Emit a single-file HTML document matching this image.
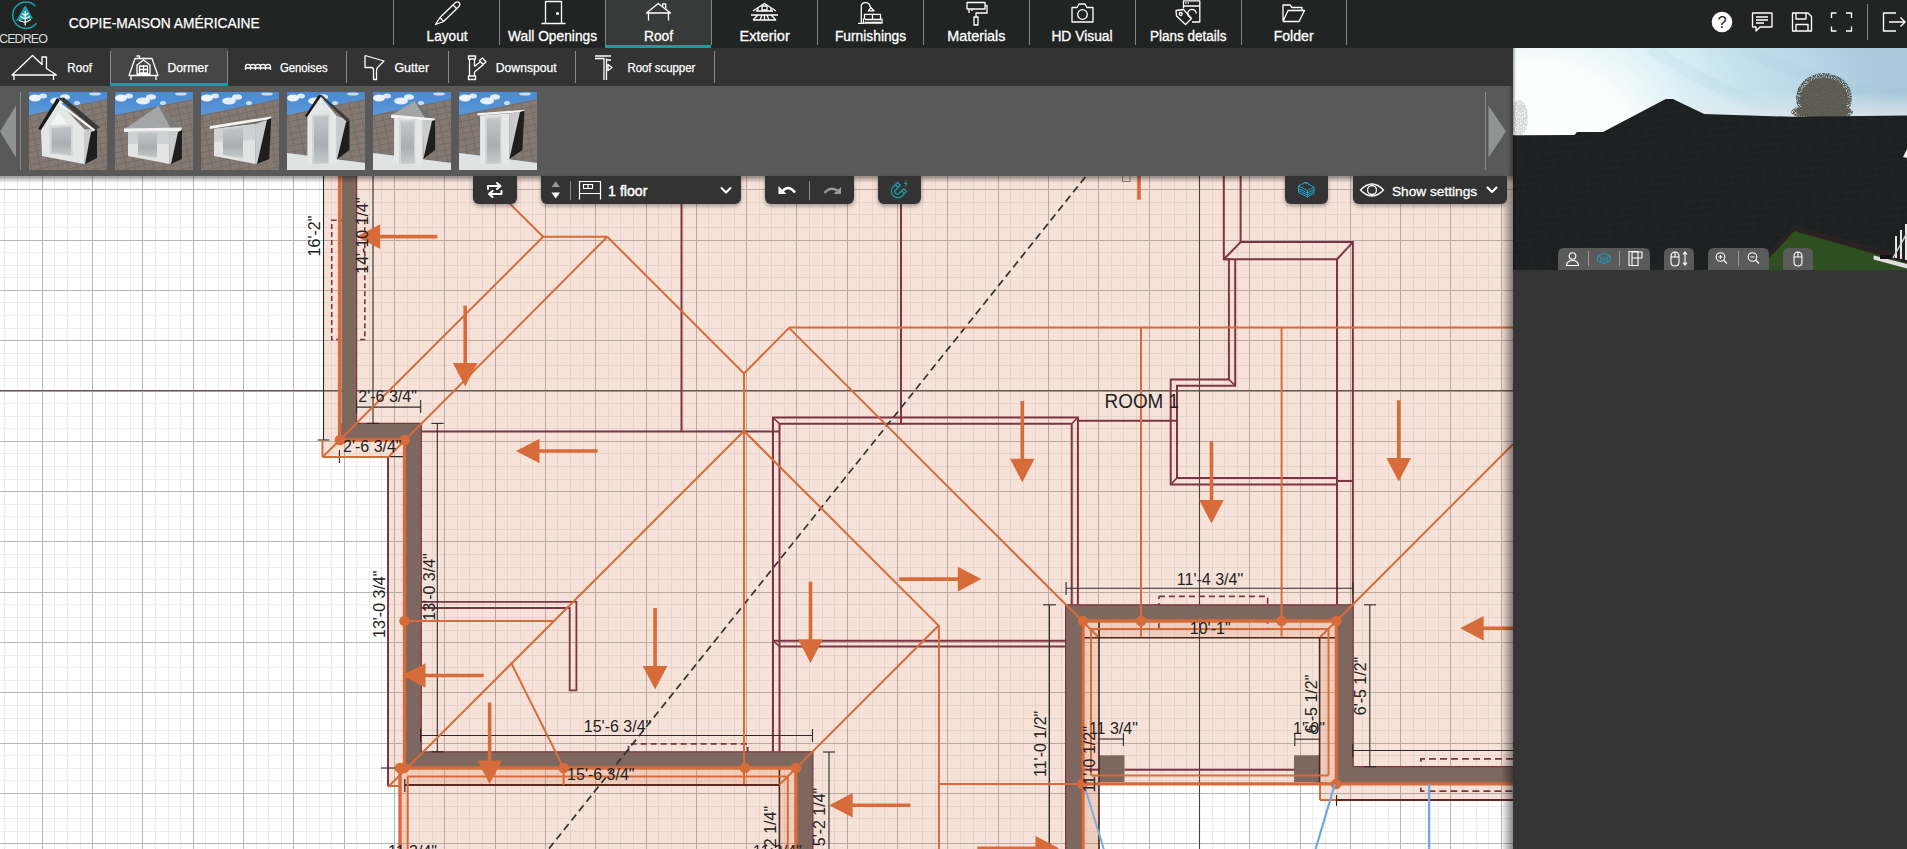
<!DOCTYPE html>
<html><head><meta charset="utf-8">
<style>
*{box-sizing:border-box}
html,body{margin:0;padding:0}
body{width:1907px;height:849px;overflow:hidden;position:relative;background:#fff;font-family:"Liberation Sans",sans-serif}
.abs{position:absolute}
</style></head><body>
<svg class="abs" style="left:0;top:0" width="1513" height="849" viewBox="0 0 1513 849" font-family="Liberation Sans, sans-serif">
<rect x="0" y="175" width="1513" height="674" fill="#fff"/>
<path d="M4.5 175V849M17.5 175V849M29.5 175V849M54.5 175V849M67.5 175V849M80.5 175V849M105.5 175V849M117.5 175V849M130.5 175V849M155.5 175V849M168.5 175V849M180.5 175V849M205.5 175V849M218.5 175V849M230.5 175V849M256.5 175V849M268.5 175V849M281.5 175V849M306.5 175V849M319.5 175V849M331.5 175V849M356.5 175V849M369.5 175V849M381.5 175V849M407.5 175V849M419.5 175V849M432.5 175V849M457.5 175V849M469.5 175V849M482.5 175V849M507.5 175V849M520.5 175V849M532.5 175V849M557.5 175V849M570.5 175V849M583.5 175V849M608.5 175V849M620.5 175V849M633.5 175V849M658.5 175V849M671.5 175V849M683.5 175V849M708.5 175V849M721.5 175V849M734.5 175V849M759.5 175V849M771.5 175V849M784.5 175V849M809.5 175V849M822.5 175V849M834.5 175V849M859.5 175V849M872.5 175V849M884.5 175V849M910.5 175V849M922.5 175V849M935.5 175V849M960.5 175V849M973.5 175V849M985.5 175V849M1010.5 175V849M1023.5 175V849M1035.5 175V849M1061.5 175V849M1073.5 175V849M1086.5 175V849M1111.5 175V849M1123.5 175V849M1136.5 175V849M1161.5 175V849M1174.5 175V849M1186.5 175V849M1212.5 175V849M1224.5 175V849M1237.5 175V849M1262.5 175V849M1274.5 175V849M1287.5 175V849M1312.5 175V849M1325.5 175V849M1337.5 175V849M1362.5 175V849M1375.5 175V849M1388.5 175V849M1413.5 175V849M1425.5 175V849M1438.5 175V849M1463.5 175V849M1476.5 175V849M1488.5 175V849M0 177.5H1513M0 202.5H1513M0 214.5H1513M0 227.5H1513M0 252.5H1513M0 265.5H1513M0 277.5H1513M0 302.5H1513M0 315.5H1513M0 328.5H1513M0 353.5H1513M0 365.5H1513M0 378.5H1513M0 403.5H1513M0 416.5H1513M0 428.5H1513M0 453.5H1513M0 466.5H1513M0 479.5H1513M0 504.5H1513M0 516.5H1513M0 529.5H1513M0 554.5H1513M0 567.5H1513M0 579.5H1513M0 604.5H1513M0 617.5H1513M0 630.5H1513M0 655.5H1513M0 667.5H1513M0 680.5H1513M0 705.5H1513M0 718.5H1513M0 730.5H1513M0 755.5H1513M0 768.5H1513M0 780.5H1513M0 806.5H1513M0 818.5H1513M0 831.5H1513" stroke="#eceeee" stroke-width="1" fill="none"/>
<path d="M42.5 175V849M92.5 175V849M142.5 175V849M193.5 175V849M243.5 175V849M293.5 175V849M344.5 175V849M394.5 175V849M444.5 175V849M495.5 175V849M545.5 175V849M595.5 175V849M646.5 175V849M696.5 175V849M746.5 175V849M796.5 175V849M847.5 175V849M897.5 175V849M947.5 175V849M998.5 175V849M1048.5 175V849M1098.5 175V849M1149.5 175V849M1199.5 175V849M1249.5 175V849M1300.5 175V849M1350.5 175V849M1400.5 175V849M1450.5 175V849M1501.5 175V849M0 189.5H1513M0 240.5H1513M0 290.5H1513M0 340.5H1513M0 391.5H1513M0 441.5H1513M0 491.5H1513M0 541.5H1513M0 592.5H1513M0 642.5H1513M0 692.5H1513M0 743.5H1513M0 793.5H1513M0 843.5H1513" stroke="#b4b8b8" stroke-width="1" fill="none"/>
<polygon points="323,175 1513,175 1513,800 1320,800 1320,784 1099,784 1099,849 400,849 400,786 388,786 388,457 323,457" fill="rgba(210,110,60,0.2)"/>
<polygon points="1083,621 1336,621 1336,784 1320,784 1320,637 1099,637 1099,849 1083,849" fill="rgba(210,100,50,0.16)"/>
<polygon points="400,768 796,768 796,849 779,849 779,785 408,785 408,849 400,849" fill="rgba(210,100,50,0.16)"/>
<line x1="0" y1="390.6" x2="1513" y2="390.6" stroke="#6a5a55" stroke-width="1.2" />
<line x1="1199.5" y1="175" x2="1199.5" y2="849" stroke="#4a4040" stroke-width="1.1" />
<polyline points="1158.9,596.4 1267.6,596.4 1267.6,629 1158.9,629 1158.9,596.4" stroke="#7e3444" stroke-width="1.6" fill="none" stroke-dasharray="6 4"/>
<polyline points="1513,758.8 1420.9,758.8 1420.9,791.2 1513,791.2" stroke="#7e3444" stroke-width="1.8" fill="none" stroke-dasharray="7 4"/>
<rect x="331.7" y="220.3" width="33.1" height="119.2" fill="none" stroke="#7e3444" stroke-width="1.6" stroke-dasharray="5 3"/>
<rect x="341.5" y="175" width="15.100000000000023" height="265" fill="#7e675f"/>
<rect x="338.5" y="423.4" width="82.80000000000001" height="16.600000000000023" fill="#7e675f"/>
<rect x="404.5" y="423.4" width="16.80000000000001" height="344.6" fill="#7e675f"/>
<rect x="404.5" y="751.8" width="408.4" height="16.200000000000045" fill="#7e675f"/>
<rect x="796" y="751.8" width="16.899999999999977" height="97.20000000000005" fill="#7e675f"/>
<rect x="1065.6" y="604.8" width="287.60000000000014" height="16.200000000000045" fill="#7e675f"/>
<rect x="1065.6" y="604.8" width="15.900000000000091" height="244.20000000000005" fill="#7e675f"/>
<rect x="1336.9" y="604.8" width="16.399999999999864" height="179.20000000000005" fill="#7e675f"/>
<rect x="1336.7" y="766.7" width="176.29999999999995" height="17.299999999999955" fill="#7e675f"/>
<rect x="1099" y="755.3" width="25.5" height="26.800000000000068" fill="#7e675f"/>
<rect x="1294" y="755.3" width="25.59999999999991" height="26.700000000000045" fill="#7e675f"/>
<polyline points="356.6,175 356.6,423.4 421.3,423.4 421.3,751.8 812.9,751.8 812.9,849" stroke="#7e3444" stroke-width="1.2" fill="none" />
<polyline points="1081.5,849 1081.5,621" stroke="#7e3444" stroke-width="1" fill="none" />
<polyline points="1065.6,849 1065.6,604.8 1353.2,604.8 1353.2,766.7 1513,766.7" stroke="#7e3444" stroke-width="1.2" fill="none" />
<line x1="681.5" y1="175" x2="681.5" y2="431.4" stroke="#7e3444" stroke-width="2" />
<line x1="421" y1="431.4" x2="744" y2="431.4" stroke="#7e3444" stroke-width="2" />
<line x1="744" y1="431.4" x2="779.7" y2="431.4" stroke="#7e3444" stroke-width="2" />
<line x1="901" y1="175" x2="901" y2="423.8" stroke="#7e3444" stroke-width="2" />
<polyline points="773,751.8 773,417.6 1077.9,417.6 1077.9,604.8" stroke="#7e3444" stroke-width="2" fill="none" />
<polyline points="779.5,751.8 779.5,423.8 1071.7,423.8 1071.7,604.8" stroke="#7e3444" stroke-width="2" fill="none" />
<line x1="773" y1="417.6" x2="779.5" y2="423.8" stroke="#7e3444" stroke-width="1.5" />
<line x1="1077.9" y1="417.6" x2="1071.7" y2="423.8" stroke="#7e3444" stroke-width="1.5" />
<polyline points="773,640.7 1065.6,640.7" stroke="#7e3444" stroke-width="2" fill="none" />
<line x1="773" y1="640.7" x2="779.5" y2="646.4" stroke="#7e3444" stroke-width="1.5" />
<polyline points="779.5,646.4 1065.6,646.4" stroke="#7e3444" stroke-width="2" fill="none" />
<line x1="1077.9" y1="420.8" x2="1177" y2="420.8" stroke="#7e3444" stroke-width="2" />
<polyline points="1223.8,175 1223.8,259.3 1228.9,259.3 1228.9,379.4 1170.7,379.4 1170.7,484.4 1337,484.4" stroke="#7e3444" stroke-width="2" fill="none" />
<polyline points="1240.6,175 1240.6,242.1 1352.9,242.1 1352.9,604.8" stroke="#7e3444" stroke-width="2" fill="none" />
<polyline points="1223.8,259.3 1337,259.3 1337,604.8" stroke="#7e3444" stroke-width="2" fill="none" />
<line x1="1223.8" y1="259.3" x2="1240.6" y2="242.1" stroke="#7e3444" stroke-width="2" />
<line x1="1337" y1="259.3" x2="1352.9" y2="242.1" stroke="#7e3444" stroke-width="2" />
<polyline points="1235.2,259.3 1235.2,385.8 1177,385.8 1177,478 1337,478" stroke="#7e3444" stroke-width="2" fill="none" />
<line x1="1228.9" y1="379.4" x2="1235.2" y2="385.8" stroke="#7e3444" stroke-width="1.5" />
<line x1="1170.7" y1="484.4" x2="1177" y2="478" stroke="#7e3444" stroke-width="1.5" />
<line x1="1337" y1="481" x2="1353" y2="481" stroke="#7e3444" stroke-width="2" />
<line x1="1081.5" y1="769.7" x2="1099" y2="769.7" stroke="#7e3444" stroke-width="2" />
<line x1="1124.5" y1="769.7" x2="1294" y2="769.7" stroke="#7e3444" stroke-width="2" />
<polyline points="421.3,601.8 576.4,601.8 576.4,690.4 569.7,690.4 569.7,608 421.3,608" stroke="#7e3444" stroke-width="1.8" fill="none" />
<line x1="388" y1="457" x2="388" y2="786" stroke="#7e3444" stroke-width="2" />
<polyline points="628.6,751.8 628.6,743.9 747.7,743.9 747.7,751.8" stroke="#7e3444" stroke-width="1.8" fill="none" stroke-dasharray="6 4"/>
<line x1="1085.3" y1="177" x2="548.7" y2="849" stroke="#333" stroke-width="1.7" stroke-dasharray="7.5 4.5"/>
<line x1="323.5" y1="175" x2="323.5" y2="440" stroke="#2a2a2a" stroke-width="1.1" />
<line x1="317.7" y1="440" x2="329.4" y2="440" stroke="#2a2a2a" stroke-width="1.1" />
<line x1="373" y1="175" x2="373" y2="423.4" stroke="#2a2a2a" stroke-width="1.1" />
<line x1="367" y1="423.4" x2="379" y2="423.4" stroke="#2a2a2a" stroke-width="1.1" />
<line x1="356.5" y1="407.1" x2="420.7" y2="407.1" stroke="#2a2a2a" stroke-width="1.1" />
<line x1="356.5" y1="400" x2="356.5" y2="413" stroke="#2a2a2a" stroke-width="1.1" />
<line x1="420.7" y1="400" x2="420.7" y2="413" stroke="#2a2a2a" stroke-width="1.1" />
<line x1="339.4" y1="456.6" x2="404.4" y2="456.6" stroke="#2a2a2a" stroke-width="1.1" />
<line x1="339.4" y1="450" x2="339.4" y2="463" stroke="#2a2a2a" stroke-width="1.1" />
<line x1="404.4" y1="450" x2="404.4" y2="463" stroke="#2a2a2a" stroke-width="1.1" />
<line x1="437.3" y1="423.4" x2="437.3" y2="751.8" stroke="#2a2a2a" stroke-width="1.1" />
<line x1="431.3" y1="423.4" x2="443.7" y2="423.4" stroke="#2a2a2a" stroke-width="1.1" />
<line x1="431.3" y1="751.8" x2="443.7" y2="751.8" stroke="#2a2a2a" stroke-width="1.1" />
<line x1="420.6" y1="735.5" x2="812.5" y2="735.5" stroke="#2a2a2a" stroke-width="1.1" />
<line x1="420.6" y1="729" x2="420.6" y2="742" stroke="#2a2a2a" stroke-width="1.1" />
<line x1="812.5" y1="729" x2="812.5" y2="742" stroke="#2a2a2a" stroke-width="1.1" />
<line x1="773" y1="768.5" x2="785.6" y2="768.5" stroke="#2a2a2a" stroke-width="1.1" />
<line x1="829" y1="752" x2="829" y2="849" stroke="#2a2a2a" stroke-width="1.1" />
<line x1="823" y1="752" x2="835" y2="752" stroke="#2a2a2a" stroke-width="1.1" />
<line x1="1049.4" y1="604.8" x2="1049.4" y2="849" stroke="#2a2a2a" stroke-width="1.1" />
<line x1="1043" y1="604.8" x2="1056" y2="604.8" stroke="#2a2a2a" stroke-width="1.1" />
<line x1="1066.1" y1="588.2" x2="1353" y2="588.2" stroke="#2a2a2a" stroke-width="1.1" />
<line x1="1066.1" y1="582" x2="1066.1" y2="595" stroke="#2a2a2a" stroke-width="1.1" />
<line x1="1353" y1="582" x2="1353" y2="595" stroke="#2a2a2a" stroke-width="1.1" />
<line x1="1092" y1="621" x2="1106" y2="621" stroke="#2a2a2a" stroke-width="1.1" />
<line x1="1314" y1="783" x2="1326" y2="783" stroke="#2a2a2a" stroke-width="1.1" />
<line x1="1098.9" y1="739" x2="1123.4" y2="739" stroke="#2a2a2a" stroke-width="1.1" />
<line x1="1123.4" y1="733" x2="1123.4" y2="746" stroke="#2a2a2a" stroke-width="1.1" />
<line x1="1294.8" y1="739.2" x2="1320" y2="739.2" stroke="#2a2a2a" stroke-width="1.1" />
<line x1="1294.8" y1="733" x2="1294.8" y2="746" stroke="#2a2a2a" stroke-width="1.1" />
<line x1="1369.8" y1="604.8" x2="1369.8" y2="766.7" stroke="#2a2a2a" stroke-width="1.1" />
<line x1="1364" y1="604.8" x2="1376" y2="604.8" stroke="#2a2a2a" stroke-width="1.1" />
<line x1="1364" y1="766.7" x2="1376" y2="766.7" stroke="#2a2a2a" stroke-width="1.1" />
<line x1="1352.8" y1="750.5" x2="1513" y2="750.5" stroke="#2a2a2a" stroke-width="1.1" />
<line x1="1352.8" y1="744" x2="1352.8" y2="757" stroke="#2a2a2a" stroke-width="1.1" />
<line x1="1083" y1="631" x2="1083" y2="644" stroke="#2a2a2a" stroke-width="1.1" />
<line x1="381" y1="768" x2="395" y2="768" stroke="#2a2a2a" stroke-width="1.1" />
<line x1="1314" y1="621" x2="1326" y2="621" stroke="#2a2a2a" stroke-width="1.1" />
<line x1="1336.4" y1="631" x2="1336.4" y2="644" stroke="#2a2a2a" stroke-width="1.1" />
<line x1="1336.5" y1="795" x2="1336.5" y2="806" stroke="#2a2a2a" stroke-width="1.1" />
<line x1="404.8" y1="785" x2="779.4" y2="785" stroke="#5e2c1e" stroke-width="2" />
<line x1="1083" y1="637.7" x2="1336.4" y2="637.7" stroke="#4a2418" stroke-width="1.6" />
<line x1="1099" y1="621" x2="1099" y2="849" stroke="#4a2418" stroke-width="1.6" />
<line x1="1319.6" y1="637" x2="1319.6" y2="784" stroke="#4a2418" stroke-width="1.6" />
<line x1="779.4" y1="768.5" x2="779.4" y2="849" stroke="#4a2418" stroke-width="1.6" />
<line x1="1336" y1="800" x2="1513" y2="800" stroke="#5e2c1e" stroke-width="2" />
<line x1="404.8" y1="779" x2="404.8" y2="792" stroke="#2a2a2a" stroke-width="1.2" />
<line x1="795.8" y1="779" x2="795.8" y2="792" stroke="#6b2a1e" stroke-width="1.5" />
<line x1="322.4" y1="457.2" x2="543.1" y2="236.8" stroke="#d76c3a" stroke-width="2" />
<line x1="388.3" y1="457" x2="607.3" y2="236.8" stroke="#d76c3a" stroke-width="2" />
<line x1="481" y1="175" x2="543.1" y2="236.8" stroke="#d76c3a" stroke-width="2" />
<line x1="543.1" y1="236.8" x2="607.3" y2="236.8" stroke="#d76c3a" stroke-width="2" />
<line x1="607.3" y1="236.8" x2="744" y2="373.5" stroke="#d76c3a" stroke-width="2" />
<line x1="744" y1="373.5" x2="788.6" y2="328.4" stroke="#d76c3a" stroke-width="2" />
<line x1="788.6" y1="327.4" x2="1513" y2="327.4" stroke="#d76c3a" stroke-width="2" />
<line x1="788.6" y1="327.4" x2="1098.3" y2="637" stroke="#d76c3a" stroke-width="2" />
<line x1="744" y1="373.5" x2="744" y2="784.3" stroke="#d76c3a" stroke-width="2" />
<line x1="744" y1="431" x2="388" y2="787" stroke="#d76c3a" stroke-width="2" />
<line x1="744" y1="431" x2="938.9" y2="625.9" stroke="#d76c3a" stroke-width="2" />
<line x1="938.9" y1="625.3" x2="938.9" y2="849" stroke="#d76c3a" stroke-width="2" />
<line x1="938.9" y1="625.3" x2="779.2" y2="785" stroke="#d76c3a" stroke-width="2" />
<line x1="510.9" y1="662.4" x2="563.6" y2="768" stroke="#d76c3a" stroke-width="2" />
<line x1="563.6" y1="768" x2="563.6" y2="785" stroke="#d76c3a" stroke-width="2" />
<line x1="1141" y1="327.4" x2="1141" y2="636.5" stroke="#d76c3a" stroke-width="2" />
<line x1="1281.6" y1="327.4" x2="1281.6" y2="636.5" stroke="#d76c3a" stroke-width="2" />
<line x1="1320.3" y1="637" x2="1513" y2="444.3" stroke="#d76c3a" stroke-width="2" />
<line x1="1091" y1="629" x2="1091" y2="775.5" stroke="#d76c3a" stroke-width="2" />
<line x1="1091" y1="629" x2="1328.5" y2="629" stroke="#d76c3a" stroke-width="2" />
<line x1="1328.5" y1="629" x2="1328.5" y2="775.5" stroke="#d76c3a" stroke-width="2" />
<line x1="1091" y1="775.5" x2="1328.5" y2="775.5" stroke="#d76c3a" stroke-width="2" />
<line x1="407.7" y1="776.4" x2="407.7" y2="849" stroke="#d76c3a" stroke-width="2" />
<line x1="407.7" y1="776.4" x2="787.8" y2="776.4" stroke="#d76c3a" stroke-width="2" />
<line x1="787.8" y1="776.4" x2="787.8" y2="849" stroke="#d76c3a" stroke-width="2" />
<line x1="322.4" y1="457" x2="388.3" y2="457" stroke="#d76c3a" stroke-width="2" />
<line x1="322.4" y1="440" x2="322.4" y2="457" stroke="#d76c3a" stroke-width="2" />
<line x1="388" y1="786" x2="400" y2="786" stroke="#d76c3a" stroke-width="2" />
<line x1="404.5" y1="621.1" x2="553" y2="621.1" stroke="#d76c3a" stroke-width="2" />
<line x1="939" y1="783.9" x2="1083" y2="783.9" stroke="#d76c3a" stroke-width="2" />
<line x1="1320" y1="784" x2="1320" y2="800" stroke="#d76c3a" stroke-width="2" />
<line x1="1320" y1="800" x2="1336" y2="800" stroke="#d76c3a" stroke-width="2" />
<line x1="339.6" y1="175" x2="339.6" y2="440" stroke="#d76c3a" stroke-width="3.4" />
<line x1="339.6" y1="440" x2="404.8" y2="440" stroke="#d76c3a" stroke-width="3.4" />
<line x1="404.5" y1="440" x2="404.5" y2="768" stroke="#d76c3a" stroke-width="3.4" />
<line x1="400" y1="768" x2="796" y2="768" stroke="#d76c3a" stroke-width="3.4" />
<line x1="400" y1="768" x2="400" y2="849" stroke="#d76c3a" stroke-width="3.4" />
<line x1="795.9" y1="768" x2="795.9" y2="849" stroke="#d76c3a" stroke-width="3.4" />
<line x1="1083" y1="621" x2="1336.4" y2="621" stroke="#d76c3a" stroke-width="3.4" />
<line x1="1083" y1="621" x2="1083" y2="849" stroke="#d76c3a" stroke-width="3.4" />
<line x1="1336.4" y1="621" x2="1336.4" y2="784" stroke="#d76c3a" stroke-width="3.4" />
<line x1="1083" y1="783.9" x2="1513" y2="783.9" stroke="#d76c3a" stroke-width="3.4" />
<line x1="1139" y1="175" x2="1139" y2="199.7" stroke="#d76c3a" stroke-width="3.6" />
<rect x="1122.5" y="174" width="7.5" height="7.5" fill="none" stroke="#888" stroke-width="1"/>
<circle cx="340" cy="440" r="5.3" fill="#d76c3a"/>
<circle cx="404.8" cy="440" r="5.3" fill="#d76c3a"/>
<circle cx="404.5" cy="621.1" r="5.3" fill="#d76c3a"/>
<circle cx="400" cy="768" r="5.3" fill="#d76c3a"/>
<circle cx="404" cy="768" r="5.3" fill="#d76c3a"/>
<circle cx="563.6" cy="768" r="5.3" fill="#d76c3a"/>
<circle cx="745" cy="768" r="5.3" fill="#d76c3a"/>
<circle cx="795.9" cy="768" r="5.3" fill="#d76c3a"/>
<circle cx="1083" cy="621" r="5.3" fill="#d76c3a"/>
<circle cx="1141" cy="621" r="5.3" fill="#d76c3a"/>
<circle cx="1281.5" cy="621" r="5.3" fill="#d76c3a"/>
<circle cx="1336.4" cy="621" r="5.3" fill="#d76c3a"/>
<circle cx="1082.5" cy="784" r="5.3" fill="#d76c3a"/>
<circle cx="1336.1" cy="784" r="5.3" fill="#d76c3a"/>
<line x1="1084.5" y1="786" x2="1103.8" y2="849" stroke="#7aaee0" stroke-width="2" />
<line x1="1334.9" y1="784" x2="1315.6" y2="849" stroke="#6fa8e4" stroke-width="2.2" />
<line x1="1429.1" y1="784" x2="1429.1" y2="849" stroke="#6fa8e4" stroke-width="2.4" />
<line x1="437.3" y1="236.6" x2="378.2" y2="236.6" stroke="#d76c3a" stroke-width="3.6" /><polygon points="356.7,236.6 380.2,224.29999999999998 380.2,248.9" fill="#d76c3a"/>
<line x1="465.2" y1="305.6" x2="465.2" y2="365.0" stroke="#d76c3a" stroke-width="3.6" /><polygon points="465.2,386.5 452.9,363.0 477.5,363.0" fill="#d76c3a"/>
<line x1="597.6" y1="451" x2="537.5" y2="451.0" stroke="#d76c3a" stroke-width="3.6" /><polygon points="516,451 539.5,438.7 539.5,463.3" fill="#d76c3a"/>
<line x1="1022.3" y1="401" x2="1022.3" y2="460.7" stroke="#d76c3a" stroke-width="3.6" /><polygon points="1022.3,482.2 1010.0,458.7 1034.6,458.7" fill="#d76c3a"/>
<line x1="1211.5" y1="441.3" x2="1211.5" y2="502.0" stroke="#d76c3a" stroke-width="3.6" /><polygon points="1211.5,523.5 1199.2,500.0 1223.8,500.0" fill="#d76c3a"/>
<line x1="1398.7" y1="400.3" x2="1398.7" y2="460.0" stroke="#d76c3a" stroke-width="3.6" /><polygon points="1398.7,481.5 1386.4,458.0 1411.0,458.0" fill="#d76c3a"/>
<line x1="899.2" y1="579.1" x2="959.8" y2="579.1" stroke="#d76c3a" stroke-width="3.6" /><polygon points="981.3,579.1 957.8,591.4 957.8,566.8000000000001" fill="#d76c3a"/>
<line x1="810.5" y1="581.6" x2="810.5" y2="641.4" stroke="#d76c3a" stroke-width="3.6" /><polygon points="810.5,662.9 798.2,639.4 822.8,639.4" fill="#d76c3a"/>
<line x1="655.1" y1="608" x2="655.1" y2="668.1" stroke="#d76c3a" stroke-width="3.6" /><polygon points="655.1,689.6 642.8000000000001,666.1 667.4,666.1" fill="#d76c3a"/>
<line x1="483.7" y1="675.5" x2="423.5" y2="675.5" stroke="#d76c3a" stroke-width="3.6" /><polygon points="402,675.5 425.5,663.2 425.5,687.8" fill="#d76c3a"/>
<line x1="489.6" y1="702.5" x2="489.6" y2="762.4" stroke="#d76c3a" stroke-width="3.6" /><polygon points="489.6,783.9 477.3,760.4 501.90000000000003,760.4" fill="#d76c3a"/>
<line x1="1520" y1="628.3" x2="1481.6" y2="628.3" stroke="#d76c3a" stroke-width="3.6" /><polygon points="1460.1,628.3 1483.6,616.0 1483.6,640.5999999999999" fill="#d76c3a"/>
<line x1="910.3" y1="805.3" x2="850.7" y2="805.3" stroke="#d76c3a" stroke-width="3.6" /><polygon points="829.2,805.3 852.7,793.0 852.7,817.5999999999999" fill="#d76c3a"/>
<line x1="977.4" y1="848.3" x2="1037.5" y2="848.3" stroke="#d76c3a" stroke-width="3.6" /><polygon points="1059,848.3 1035.5,860.5999999999999 1035.5,836.0" fill="#d76c3a"/>
<g font-family="Liberation Sans, sans-serif">
<text x="358.3" y="402.4" font-size="16" text-anchor="start" fill="#222">2'-6 3/4&quot;</text>
<text x="343" y="451.8" font-size="16" text-anchor="start" fill="#222">2'-6 3/4&quot;</text>
<text x="1176.8" y="584.8" font-size="16" text-anchor="start" fill="#222">11'-4 3/4&quot;</text>
<text x="1189.8" y="633.5" font-size="16" text-anchor="start" fill="#222">10'-1&quot;</text>
<text x="583.8" y="731.6" font-size="16" text-anchor="start" fill="#222">15'-6 3/4&quot;</text>
<text x="567.1" y="780.4" font-size="16" text-anchor="start" fill="#222">15'-6 3/4&quot;</text>
<text x="1088.9" y="734.2" font-size="16" text-anchor="start" fill="#222">11 3/4&quot;</text>
<text x="1293" y="734.2" font-size="16" text-anchor="start" fill="#222">1'-0&quot;</text>
<text x="388" y="857" font-size="16" text-anchor="start" fill="#222">11 3/4&quot;</text>
<text x="752.8" y="857" font-size="16" text-anchor="start" fill="#222">11 3/4&quot;</text>
<text x="1104.6" y="408" font-size="20.2" fill="#222" textLength="74.5" lengthAdjust="spacingAndGlyphs">ROOM 1</text>
<text transform="translate(319.7,236) rotate(-90)" text-anchor="middle" font-size="16" fill="#222">16'-2&quot;</text>
<text transform="translate(368.2,235.6) rotate(-90)" text-anchor="middle" font-size="16" fill="#222">14'-10 1/4&quot;</text>
<text transform="translate(384.5,604.3) rotate(-90)" text-anchor="middle" font-size="16" fill="#222">13'-0 3/4&quot;</text>
<text transform="translate(434.8,587) rotate(-90)" text-anchor="middle" font-size="16" fill="#222">13'-0 3/4&quot;</text>
<text transform="translate(1046.2,743.9) rotate(-90)" text-anchor="middle" font-size="16" fill="#222">11'-0 1/2&quot;</text>
<text transform="translate(1095,759.3) rotate(-90)" text-anchor="middle" font-size="16" fill="#222">11'-0 1/2&quot;</text>
<text transform="translate(1366,686) rotate(-90)" text-anchor="middle" font-size="16" fill="#222">6'-5 1/2&quot;</text>
<text transform="translate(1316.6,703.9) rotate(-90)" text-anchor="middle" font-size="16" fill="#222">6'-5 1/2&quot;</text>
<text transform="translate(825.2,817) rotate(-90)" text-anchor="middle" font-size="16" fill="#222">5'-2 1/4&quot;</text>
<text transform="translate(776,839) rotate(-90)" text-anchor="middle" font-size="16" fill="#222">11'-2 1/4&quot;</text>
</g>
<defs>
<linearGradient id="topsh" x1="0" y1="0" x2="0" y2="1"><stop offset="0" stop-color="#000" stop-opacity="0.38"/><stop offset="1" stop-color="#000" stop-opacity="0"/></linearGradient>
<linearGradient id="rsh" x1="0" y1="0" x2="1" y2="0"><stop offset="0" stop-color="#000" stop-opacity="0"/><stop offset="1" stop-color="#000" stop-opacity="0.45"/></linearGradient>
</defs>
<rect x="0" y="176" width="1513" height="7" fill="url(#topsh)"/>
<rect x="1501" y="175" width="12" height="674" fill="url(#rsh)"/>
</svg>
<div class="abs" style="left:0;top:0;width:1907px;height:48px;background:#222423"></div>
<!-- logo -->
<svg class="abs" style="left:0;top:0" width="60" height="48" viewBox="0 0 60 48">
  <path d="M35.6 6.2 A13.2 13.2 0 1 0 36.4 23.3" fill="none" stroke="#1aa3ad" stroke-width="1.5"/>
  <path d="M25.2 5.3 L16 21 L33 18.6 Z" fill="#1aa3ad"/>
  <path d="M25.2 11 V25.5 M25.2 15.5 L22 13.5 M25.2 15.5 L28.5 13 M25.2 19 L20.5 16.5 M25.2 19 L30 16.5 M25.2 22.5 L19 20.5 M25.2 22.5 L31 19.5" stroke="#fff" stroke-width="1.2" fill="none"/>
</svg>
<div class="abs" style="left:-1px;top:33px;font-size:12.5px;line-height:13px;color:#dcdcdc;letter-spacing:-0.9px">CEDREO</div>
<svg class="abs" style="left:0;top:0" width="300" height="48"><text x="68.7" y="27.7" font-family="Liberation Sans, sans-serif" font-size="13.8" fill="#fff" stroke="#fff" stroke-width="0.25" textLength="191" lengthAdjust="spacingAndGlyphs">COPIE-MAISON AMÉRICAINE</text></svg>
<!-- nav -->
<div class="abs" style="left:605px;top:0;width:106px;height:48px;background:#383a39"></div>
<div class="abs" style="left:605px;top:45px;width:106px;height:3px;background:#13a0a0"></div>
<svg class="abs" style="left:0;top:0" width="1907" height="48" viewBox="0 0 1907 48">
 <g stroke="#858585" stroke-width="1">
  <path d="M393.5 0V45M499.5 0V45M605.5 0V45M711.5 0V45M817.5 0V45M923.5 0V45M1029.5 0V45M1135.5 0V45M1241.5 0V45M1346.5 0V45M1867.5 4V40"/>
 </g>
 <g fill="none" stroke="#fff" stroke-width="1.3" stroke-linejoin="round">
  <!-- pencil -->
  <path d="M435.5 24.5 L440 17.5 L455.5 2.5 Q458 1 459.5 3 Q460.5 5 459 6.5 L443.5 21.5 Z M440 17.5 L443.5 21.5 M453 5 L457 9"/>
  <!-- door -->
  <path d="M545.5 23V1.5H561.5V23 M541.5 23.5H565.5"/><circle cx="557.5" cy="13.5" r="0.9" fill="#fff"/>
  <!-- roof -->
  <path d="M646.5 13 L658.2 3.5 L670.5 13 Z M648.5 13 V20.5 M668.5 13 V20.5 M662.7 6.2 V3.8 H665.7 V8.6"/>
  <!-- exterior -->
  <path d="M753 11 L764.5 3.5 L776 11 M756 11 H773 M758 11 V8 M771 11 V8 M751 15 H778 M753 20 L758 15 M776 20 L771 15 M760 20 L762 15 M769 20 L767 15 M764.5 15 V20 M753 20H776"/>
  <path d="M762 6 H767 V10 H762Z"/>
  <!-- furnishings -->
  <path d="M861.3 23 V6.5 Q861.3 2.6 865.5 2.6 Q869.5 2.6 870.5 7.5 M868.3 10.8 L871 7.6 L874 10.8 Z M858 23.3 H864 M864.5 19.3 V14.3 H880.5 V19.3 M872.5 14.3 V19.3 M863.5 18.5 V23.2 H882 V18.5 M865 19.5 H881 M865 22.5 H881"/>
  <!-- materials (roller) -->
  <path d="M967 2.5 H985 V9 H967 Z M985 5.5 H987 V13 H976 V17 M974 17 H978 V25 H974 Z M969 9 V13 M972 9 V11"/>
  <!-- camera -->
  <path d="M1072 7.5 H1077 L1079 4 H1085 L1087 7.5 H1093 V22 H1072 Z"/><circle cx="1082.5" cy="14.5" r="4.8"/>
  <!-- plans details -->
  <path d="M1183.5 8.5 V0.8 H1199.8 V22 H1192 M1184 6 H1199.5 M1185.3 3 H1186.5 M1187.6 3 H1188.8"/>
  <path d="M1196.3 13.5 A4.3 4.3 0 1 0 1190 17.5"/>
  <path d="M1176 10.5 L1183.5 9.5 L1191.5 18.5 L1185.5 24.5 L1176.5 16 Z"/><circle cx="1180.7" cy="14" r="1.5"/>
  <!-- folder -->
  <path d="M1283 21.5 V5 H1290 L1292 7.5 H1302 V10.5 M1283 21.5 H1299 L1304.5 10.5 H1288 L1283 21.5"/>
 </g>
 <!-- right icons -->
 <circle cx="1722" cy="22" r="10.3" fill="#fff"/>
 <text x="1722" y="27.5" text-anchor="middle" font-family="Liberation Sans, sans-serif" font-size="16.5" fill="#222423">?</text>
 <g fill="none" stroke="#fff" stroke-width="1.35" stroke-linejoin="round">
  <path d="M1752.5 13 H1772 V27 H1760 L1756 31 V27 H1752.5 Z M1756 17 H1768 M1756 20 H1768 M1756 23 H1764"/>
  <path d="M1792.5 13 H1808 L1811.5 16.5 V31 H1792.5 Z M1796 13 V19 H1806 V13 M1796 31 V24.5 H1808 V31"/>
  <path d="M1831.5 18 V13 H1836.5 M1846 13 H1851.5 V18 M1851.5 26.5 V31 H1846 M1836.5 31 H1831.5 V26.5"/>
  <path d="M1896 13 H1883.5 V31 H1896 M1889 22 H1905 M1900.5 17.5 L1905 22 L1900.5 26.5"/>
 </g>
 <g fill="#fff" stroke="#fff" stroke-width="0.3" font-family="Liberation Sans, sans-serif" font-size="13.8">
  <text x="426.6" y="40.8" textLength="41" lengthAdjust="spacingAndGlyphs">Layout</text>
  <text x="508.1" y="40.8" textLength="89" lengthAdjust="spacingAndGlyphs">Wall Openings</text>
  <text x="644" y="40.8" textLength="29" lengthAdjust="spacingAndGlyphs">Roof</text>
  <text x="739.5" y="40.8" textLength="50.3" lengthAdjust="spacingAndGlyphs">Exterior</text>
  <text x="834.9" y="40.8" textLength="71.3" lengthAdjust="spacingAndGlyphs">Furnishings</text>
  <text x="947.2" y="40.8" textLength="58.3" lengthAdjust="spacingAndGlyphs">Materials</text>
  <text x="1051.4" y="40.8" textLength="61.2" lengthAdjust="spacingAndGlyphs">HD Visual</text>
  <text x="1150" y="40.8" textLength="76.5" lengthAdjust="spacingAndGlyphs">Plans details</text>
  <text x="1273.7" y="40.8" textLength="39.9" lengthAdjust="spacingAndGlyphs">Folder</text>
 </g>
</svg>

<div class="abs" style="left:0;top:48px;width:1513px;height:38px;background:#333"></div>
<div class="abs" style="left:110px;top:48px;width:118px;height:38px;background:#444544"></div>
<div class="abs" style="left:110px;top:83px;width:118px;height:3px;background:#13a0a0"></div>
<svg class="abs" style="left:0;top:48px" width="1513" height="38" viewBox="0 48 1513 38">
 <g stroke="#8a8a8a" stroke-width="1"><path d="M110.5 51V83M227.5 51V83M346.5 51V83M448.5 51V83M575.5 51V83M714.5 51V83"/></g>
 <g fill="none" stroke="#fff" stroke-width="1.3" stroke-linejoin="round">
  <!-- roof -->
  <path d="M12 75 L32.5 55.5 L42 64.5 V57 H46.5 V68.5 L56.5 75 Z M14 75 V80 M53.5 75 V80"/>
  <!-- dormer -->
  <path d="M129 75.5 L135 58.5 H152 L158 75.5 Z M131 75.5 V80 M156 75.5 V80 M136.5 56 H139.5 V58.5 M137 74 V65 L143.5 60 L150 65 V74 Z M139.5 73 V66 H147.5 V73 Z M143.5 66 V73 M139.5 69.5 H147.5"/>
  <!-- gutter -->
  <path d="M365 55.5 V67.5 H371.5 Q373.5 67.5 373.5 70 V79.5 H376.5 V70.5 Q376.5 68 379 66 L384 61 L365 55.5"/>
  <!-- downspout -->
  <path d="M468.5 56 H475.5 V59 H468.5 Z M469.5 59 V76 M474.5 59 V66.5 M474.5 72 V76 M468.5 76 H475.5 V79.5 H468.5 Z M474.5 66.5 L480.5 61.5 M474.5 72 L483.5 64.5 M479.5 60.5 L482.5 58 L486 62 L483 64.5 Z"/>
  <!-- scupper -->
  <path d="M595 56 H611 M595 58.5 H604 V80 M606.5 58.5 V80 M606.5 60 H611 M608 64.5 V70.5 L612 67.5 Z"/>
  <!-- genoises -->
  <path d="M245.5 70 V66.8 A2.5 2.5 0 0 1 250.5 66.8 V70 M250.5 66.8 A2.5 2.5 0 0 1 255.5 66.8 V70 M255.5 66.8 A2.5 2.5 0 0 1 260.5 66.8 V70 M260.5 66.8 A2.5 2.5 0 0 1 265.5 66.8 V70 M265.5 66.8 A2.5 2.5 0 0 1 270.5 66.8 V70 M245.5 68 H270.5"/>
 </g>
 <g fill="#fff" stroke="#fff" stroke-width="0.25" font-family="Liberation Sans, sans-serif" font-size="12">
  <text x="67.3" y="71.9" textLength="24.6" lengthAdjust="spacingAndGlyphs">Roof</text>
  <text x="167.4" y="71.9" textLength="40.9" lengthAdjust="spacingAndGlyphs">Dormer</text>
  <text x="279.9" y="71.9" textLength="47.8" lengthAdjust="spacingAndGlyphs">Genoises</text>
  <text x="394.4" y="71.9" textLength="34.7" lengthAdjust="spacingAndGlyphs">Gutter</text>
  <text x="495.8" y="71.9" textLength="60.9" lengthAdjust="spacingAndGlyphs">Downspout</text>
  <text x="627.4" y="71.9" textLength="68" lengthAdjust="spacingAndGlyphs">Roof scupper</text>
 </g>
</svg>

<div class="abs" style="left:0;top:86px;width:1513px;height:90px;background:#595959"></div>
<div class="abs" style="left:1508px;top:86px;width:5px;height:90px;background:linear-gradient(90deg,rgba(0,0,0,0),rgba(0,0,0,.35))"></div>
<svg class="abs" style="left:0;top:86px" width="1513" height="89" viewBox="0 86 1513 89">
 <defs>
  <linearGradient id="sky" x1="0" y1="0" x2="0" y2="1"><stop offset="0" stop-color="#4a8ad2"/><stop offset="1" stop-color="#80b4e8"/></linearGradient>
  <linearGradient id="win" x1="0" y1="0" x2="0" y2="1"><stop offset="0" stop-color="#c2c6c8"/><stop offset="0.6" stop-color="#a9aeb0"/><stop offset="1" stop-color="#c8cbcc"/></linearGradient>
  <pattern id="shing" width="9" height="6" patternUnits="userSpaceOnUse" patternTransform="rotate(-12)">
   <rect width="9" height="6" fill="#847a73"/><path d="M0 5.5H9M4.5 0V5.5" stroke="#6f6660" stroke-width="0.7"/>
  </pattern>
  <g id="clouds" fill="#fff">
   <ellipse cx="6" cy="6" rx="6" ry="3.5" opacity=".9"/><ellipse cx="14" cy="4" rx="4" ry="2.5" opacity=".8"/>
   <ellipse cx="28" cy="9" rx="7" ry="3.5" opacity=".85"/><ellipse cx="36" cy="5" rx="5" ry="2.8" opacity=".85"/>
   <ellipse cx="48" cy="11" rx="3" ry="2" opacity=".7"/><ellipse cx="66" cy="2" rx="6" ry="1.6" opacity=".7"/>
  </g>
 </defs>
 <g fill="none" stroke="#8d8d8d" stroke-width="1"><path d="M20.5 92V170M1485.5 92V170"/></g>
 <polygon points="0,131.5 16,105.5 16,157.5" fill="#8f9392"/>
 <polygon points="1488.5,105.5 1506,131.5 1488.5,157.5" fill="#8f9392"/>
 <!-- thumb 1 gable -->
 <g transform="translate(29,92)">
  <rect width="78" height="78" fill="url(#sky)"/><use href="#clouds"/>
  <polygon points="0,23 78,7 78,78 0,78" fill="url(#shing)"/>
  <polygon points="12,37 29,9 55,37 55,72 13,64" fill="#e4e6e6"/>
  <polygon points="21,33 29.5,20 38,32" fill="#f2f3f3"/>
  <polygon points="20,34 44,33 44,64 20,62" fill="#d6d9da"/>
  <polygon points="22.5,36 42,35 42,63 22.5,61" fill="url(#win)"/>
  <polygon points="55,37 66,38 66,66 55,72" fill="#c9cbcc"/>
  <polygon points="62,40 68,37 68,66 56,72" fill="#1e1e1e"/>
  <polygon points="29,6 35,5.5 71,35.5 66,38" fill="#3a3a3a"/>
  <polygon points="29.5,9.5 66,37.5 65,39.5 29,12" fill="#f4f4f4"/>
  <polygon points="28,6 31,8 12,38 9,37" fill="#1a1a1a"/>
 </g>
 <!-- thumb 2 hip -->
 <g transform="translate(115,92)">
  <rect width="78" height="78" fill="url(#sky)"/><use href="#clouds"/>
  <polygon points="0,23 78,7 78,78 0,78" fill="url(#shing)"/>
  <polygon points="9.5,37 43.6,13.7 66.8,36.2" fill="#a3a5a6"/>
  <polygon points="43.6,13.7 66.8,36.2 56,37" fill="#7a7a7a"/>
  <polygon points="9,36.5 67,35.5 66,39 9,40" fill="#f2f2f2"/>
  <polygon points="13,40 54.5,39 54.5,72 13,64" fill="#e2e4e4"/>
  <polygon points="13,40 54.5,39 54.5,52 13,52" fill="#cfd2d3"/>
  <polygon points="23,41 42,40.5 42,66 23,63" fill="url(#win)"/>
  <polygon points="54.5,39 64,39 60,68 54.5,72" fill="#cbcdce"/>
  <polygon points="63,40 67,38 66.8,67 56,72" fill="#1e1e1e"/>
 </g>
 <!-- thumb 3 shed -->
 <g transform="translate(201,92)">
  <rect width="78" height="78" fill="url(#sky)"/><use href="#clouds"/>
  <polygon points="0,23 78,7 78,78 0,78" fill="url(#shing)"/>
  <polygon points="8.9,34 70.2,24.5 70.2,27 8.9,37" fill="#f2f2f2"/>
  <polygon points="13,37 54.5,32 54.5,72 13,64" fill="#e2e4e4"/>
  <polygon points="13,37 54.5,32 54.5,48 13,50" fill="#cfd2d3"/>
  <polygon points="22,38 42,35.5 42,66 22,63" fill="url(#win)"/>
  <polygon points="54.5,32 66,28 62,68 54.5,72" fill="#cbcdce"/>
  <polygon points="66,28 70.2,26 68.2,67 56,72" fill="#1e1e1e"/>
 </g>
 <!-- thumb 4 tall gable -->
 <g transform="translate(287,92)">
  <rect width="78" height="78" fill="url(#sky)"/><use href="#clouds"/>
  <polygon points="0,23 78,7 78,71 0,61" fill="url(#shing)"/>
  <polygon points="0,61 78,71 78,78 0,78" fill="#e0e2e2"/>
  <polygon points="20.4,24 32.7,4 49.8,24 49.8,72.3 20.4,72.3" fill="#e6e8e8"/>
  <polygon points="25,23 42.5,22 42.5,72 25,72" fill="#d2d5d6"/>
  <polygon points="27,25 41,24 41,71 27,72" fill="url(#win)"/>
  <polygon points="49.8,24 62.7,28 62.7,58 49.8,67.6" fill="#c9cbcc"/>
  <polygon points="59,30 62.7,28 62.7,58 50,67.6" fill="#1e1e1e"/>
  <polygon points="32,3 35,3 63,28 60,30" fill="#3c3c3c"/>
  <polygon points="32,2.5 34,4.5 20,25 18,24" fill="#1a1a1a"/>
 </g>
 <!-- thumb 5 tall hip -->
 <g transform="translate(373,92)">
  <rect width="78" height="78" fill="url(#sky)"/><use href="#clouds"/>
  <polygon points="0,23 78,7 78,71 0,61" fill="url(#shing)"/>
  <polygon points="0,61 78,71 78,78 0,78" fill="#e0e2e2"/>
  <polygon points="18.4,23.3 41.6,9 62,27.4" fill="#a3a5a6"/>
  <polygon points="41.6,9 62,27.4 52,26" fill="#6e6e6e"/>
  <polygon points="18,22.5 62,26.5 61,29 18,26" fill="#f2f2f2"/>
  <polygon points="21.1,26 49.8,28 49.8,72.3 21.1,72.3" fill="#e6e8e8"/>
  <polygon points="26,28 42.5,28 42.5,72 26,72" fill="#d2d5d6"/>
  <polygon points="28,30 41,30 41,71 28,72" fill="url(#win)"/>
  <polygon points="49.8,28 62.3,28 62.3,58 50.4,66.9" fill="#c9cbcc"/>
  <polygon points="59,29 62.3,28 62.3,58 50.4,66.9" fill="#1e1e1e"/>
 </g>
 <!-- thumb 6 tall shed -->
 <g transform="translate(459,92)">
  <rect width="78" height="78" fill="url(#sky)"/><use href="#clouds"/>
  <polygon points="0,23 78,7 78,71 0,61" fill="url(#shing)"/>
  <polygon points="0,61 78,71 78,78 0,78" fill="#e0e2e2"/>
  <polygon points="18.4,21.2 65.4,17.8 65.4,20 18.4,23.5" fill="#f2f2f2"/>
  <polygon points="21.1,23.5 50.4,21.5 50.4,72.3 21.1,72.3" fill="#e6e8e8"/>
  <polygon points="26,25 42.5,24 42.5,72 26,72" fill="#d2d5d6"/>
  <polygon points="28,27 41,26 41,71 28,72" fill="url(#win)"/>
  <polygon points="50.4,21.5 63,19.5 60,60 50.4,67" fill="#c9cbcc"/>
  <polygon points="61,20 65.4,18.5 63.4,58 50.4,67" fill="#1e1e1e"/>
 </g>
</svg>

<style>
.tb{position:absolute;top:176px;height:27.5px;background:#333;border-radius:0 0 6px 6px;box-shadow:0 2px 4px rgba(0,0,0,.35)}
</style>
<div class="tb" style="left:473px;width:44px"></div>
<div class="tb" style="left:541px;width:199.5px"></div>
<div class="tb" style="left:765px;width:88.5px"></div>
<div class="tb" style="left:878px;width:43px"></div>
<div class="tb" style="left:1284.5px;width:43px"></div>
<div class="tb" style="left:1352.5px;width:154px"></div>
<svg class="abs" style="left:0;top:175px" width="1513" height="30" viewBox="0 175 1513 30">
 <g fill="none" stroke="#fff" stroke-width="2" stroke-linejoin="round" stroke-linecap="round">
  <!-- swap -->
  <path d="M488 189 V186 H500 M497 183 L500.5 186 L497 189 M501.5 191 V194 H489.5 M492.5 191 L489 194 L492.5 197"/>
  <!-- chevrons -->
  <path d="M721.5 188 L726 192.5 L730.5 188"/>
  <path d="M1487.5 187.5 L1492 192 L1496.5 187.5"/>
 </g>
 <g stroke="#8a8a8a" stroke-width="1"><path d="M570.5 181V200M809.5 181V200"/></g>
 <polygon points="551.5,187 555.7,181.5 560,187" fill="#9a9a9a"/>
 <polygon points="551.5,192.5 555.7,198.5 560,192.5" fill="#fff"/>
 <g fill="none" stroke="#fff" stroke-width="1.2">
  <path d="M579.5 199.5 V181.5 H600.5 V199.5 M580 193.5 H600 M583.5 184.5 H592.5 V188.5 H583.5 Z M588 184.5 V188.5"/>
 </g>
 <text x="608.1" y="196.2" font-family="Liberation Sans, sans-serif" font-size="14.5" fill="#fff" stroke="#fff" stroke-width="0.45" textLength="39.3" lengthAdjust="spacingAndGlyphs">1 floor</text>
 <!-- undo/redo -->
 <polygon points="778.5,186 778.5,194 786.5,194" fill="#fff"/>
 <path d="M782 191.5 Q788.5 184 795 192.5" fill="none" stroke="#fff" stroke-width="2.6"/>
 <polygon points="841,187 841,194 833.5,194" fill="#9a9a9a"/>
 <path d="M824.5 193 Q830 186 837.5 190.5" fill="none" stroke="#9a9a9a" stroke-width="2.4"/>
 <!-- magnet -->
 <g fill="none" stroke="#1b9bab" stroke-width="1.3" stroke-linejoin="round">
  <path d="M897.5 182.5 L892.8 187.2 A6.4 6.4 0 0 0 901.8 196.2 L906.5 191.5 L903.7 188.7 L899 193.4 A2.4 2.4 0 0 1 895.6 190 L900.3 185.3 Z"/>
  <path d="M895.3 184.7 L898.1 187.5 M901.9 191.1 L904.7 193.9"/>
  <path d="M906.5 180.5 L904.5 183.5 H907.2 L905.2 186.5" stroke-width="1"/>
 </g>
 <!-- layers -->
 <g fill="none" stroke="#1cb0d0" stroke-width="0.9">
  <path d="M1298.5 186 L1305 182.5 L1314 187 L1307.5 190.5 Z M1298.5 186 V192.5 L1307.5 197 V190.5 M1314 187 V193.5 L1307.5 197 M1298.5 188.5 L1307.5 193 L1314 189.5 M1298.5 190.5 L1307.5 195 L1314 191.5 M1303 184 Q1306 181 1308.5 183.5"/>
 </g>
 <!-- eye -->
 <g fill="none" stroke="#fff" stroke-width="1.3">
  <path d="M1360.5 190 Q1372 178 1383.5 190 Q1372 202 1360.5 190 Z"/><circle cx="1372" cy="190" r="4.5"/>
 </g>
 <text x="1391.9" y="195.7" font-family="Liberation Sans, sans-serif" font-size="13.5" fill="#fff" stroke="#fff" stroke-width="0.3" textLength="85.2" lengthAdjust="spacingAndGlyphs">Show settings</text>
</svg>

<div class="abs" style="left:1513px;top:48px;width:394px;height:801px;background:#353535"></div>
<svg class="abs" style="left:1513px;top:48px" width="394" height="222" viewBox="1513 48 394 222">
 <defs>
  <radialGradient id="skyg" cx="1540" cy="165" r="360" gradientUnits="userSpaceOnUse">
   <stop offset="0" stop-color="#ffffff"/><stop offset="0.28" stop-color="#fafdfc"/><stop offset="0.42" stop-color="#def2f7"/><stop offset="0.62" stop-color="#c5e1ee"/><stop offset="0.85" stop-color="#b3d2e3"/><stop offset="1" stop-color="#a8c7d9"/>
  </radialGradient>
  <linearGradient id="haze" x1="0" y1="0" x2="0" y2="1"><stop offset="0" stop-color="#e8eef0" stop-opacity="0"/><stop offset="1" stop-color="#e4e8ea" stop-opacity="0.8"/></linearGradient>
  <pattern id="roofp" width="16" height="7" patternUnits="userSpaceOnUse" patternTransform="rotate(-6)">
   <rect width="16" height="7" fill="#1d2021"/><path d="M0 6.5H16M8 0V6.5" stroke="#212425" stroke-width="1"/>
  </pattern>
  <filter id="speck" x="-20%" y="-20%" width="140%" height="140%">
   <feTurbulence type="fractalNoise" baseFrequency="0.9" numOctaves="1" seed="3" result="n"/>
   <feColorMatrix in="n" type="matrix" values="0 0 0 0 0  0 0 0 0 0  0 0 0 0 0  0 0 0 4 -1.2" result="a"/>
   <feComposite in="SourceGraphic" in2="a" operator="in"/>
  </filter>
 </defs>
 <rect x="1513" y="48" width="394" height="222" fill="url(#skyg)"/>
 <g opacity="0.12" fill="none" stroke="#9cc4d8" stroke-width="12">
  <path d="M1650 48 Q1720 95 1800 118 M1740 48 Q1820 85 1907 100"/>
 </g>
 <rect x="1680" y="92" width="227" height="26" fill="url(#haze)"/>
 <!-- tree right -->
 <ellipse cx="1824" cy="99" rx="24" ry="21" fill="#66655c"/>
 <ellipse cx="1823" cy="111" rx="27" ry="7" fill="#66655c"/>
 <g filter="url(#speck)">
  <ellipse cx="1824" cy="98" rx="28" ry="25" fill="#5a5950"/>
  <ellipse cx="1822" cy="112" rx="31" ry="8" fill="#5a5950"/>
 </g>
 <!-- left sparse tree -->
 <g filter="url(#speck)" opacity="0.45"><ellipse cx="1519" cy="118" rx="9" ry="18" fill="#a0a6a6"/></g>
 <polygon points="1513,135.3 1574.4,135 1577,132.1 1603,132.1 1665.7,99 1672.9,99 1704.2,113.9 1792.7,116.8 1907,115.5 1907,270 1513,270" fill="url(#roofp)"/>
 <!-- roof fold shading -->
 
 <!-- grass -->
 <polygon points="1751,270 1794.4,225.5 1907,256 1907,270" fill="#2a2222"/>
 <polygon points="1758,270 1794.4,231 1907,263 1907,270" fill="#2e5020"/>
 <!-- right railing -->
 <g stroke="#e6e6e6" stroke-width="2"><path d="M1896 236V258M1901 230V259M1906 224V260"/></g>
 <path d="M1893 258 L1907 233" stroke="#cfcfcf" stroke-width="1.5"/>
 <polygon points="1873.6,255.5 1907,264 1907,268.5 1873.6,259.5" fill="#e0e0e0"/>
 <polygon points="1880,255 1892,255 1892,259 1880,259" fill="#111"/>
 <polygon points="1903,157 1907,149 1907,158" fill="#ececec"/>
 <!-- 3d buttons -->
 <g fill="#5a5a5a">
  <path d="M1558 270V254Q1558 248 1564 248H1644Q1650 248 1650 254V270Z"/>
  <path d="M1664 270V254Q1664 248 1670 248H1688Q1694 248 1694 254V270Z"/>
  <path d="M1708 270V254Q1708 248 1714 248H1763Q1769 248 1769 254V270Z"/>
  <path d="M1783 270V254Q1783 248 1789 248H1807Q1813 248 1813 254V270Z"/>
 </g>
 <g stroke="#9a9a9a" stroke-width="1"><path d="M1588.5 251V266M1619.5 251V266M1738.5 251V266"/></g>
 <g fill="none" stroke="#fff" stroke-width="1.1">
  <circle cx="1572.5" cy="256" r="3.3"/><path d="M1566.5 265.5 Q1567 260.5 1572.5 260.5 Q1578 260.5 1578.5 265.5 Z"/>
  <path d="M1629 251.5H1638V265.5H1629Z M1632 251.5V265.5 M1632 252H1642V258H1632"/>
  <path d="M1671 257 Q1671 252 1675 252 Q1679 252 1679 257 V262 Q1679 266 1675 266 Q1671 266 1671 262 Z M1675 252V257 M1671 257H1679"/>
  <path d="M1685 252V265 M1683 254.5L1685 252L1687 254.5 M1683 262.5L1685 265L1687 262.5"/>
  <circle cx="1720.5" cy="257" r="4.3"/><path d="M1723.5 260 L1727 263.5 M1718.5 257H1722.5M1720.5 255V259"/>
  <circle cx="1752.5" cy="257" r="4.3"/><path d="M1755.5 260 L1759 263.5 M1750.5 257H1754.5"/>
  <path d="M1794 257 Q1794 252 1798 252 Q1802 252 1802 257 V262 Q1802 266 1798 266 Q1794 266 1794 262 Z M1798 252V257 M1794 257H1802"/>
 </g>
 <g fill="none" stroke="#1a9ac0" stroke-width="1">
  <path d="M1597.5 256 L1603.5 253 L1610 256 L1604 259 Z M1597.5 256V261L1604 264V259 M1610 256V261L1604 264 M1601 258V262 M1607 258V262"/>
 </g>
</svg>
<div class="abs" style="left:1513px;top:48px;width:3px;height:222px;background:linear-gradient(90deg,rgba(0,0,0,.35),rgba(0,0,0,0))"></div>

</body></html>
